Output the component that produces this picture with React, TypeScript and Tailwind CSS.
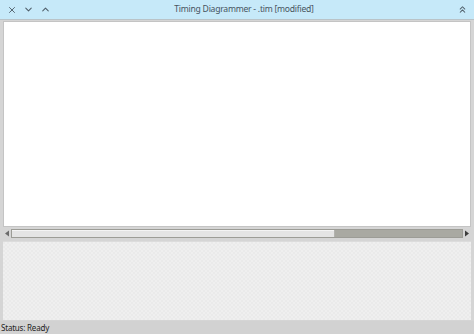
import { ChevronDown, ChevronUp, ChevronsUp, X } from "lucide-react";

function ScrollArrow({ dir }: { dir: "left" | "right" }) {
  return (
    <svg width="6" height="7" viewBox="0 0 6 7" className="shrink-0">
      {dir === "left" ? (
        <path d="M5 0.5 L1 3.5 L5 6.5 Z" fill="#6b6b6b" />
      ) : (
        <path d="M1 0.5 L5 3.5 L1 6.5 Z" fill="#3c3c3c" />
      )}
    </svg>
  );
}

export default function App() {
  return (
    <div
      className="w-[474px] h-[334px] flex flex-col bg-[#d5d5d5] overflow-hidden"
      style={{ fontFamily: '"Noto Sans", "Open Sans", sans-serif' }}
    >
      {/* title bar */}
      <div className="h-[20px] shrink-0 bg-[#c6e9f9] flex items-center relative border-b border-[#b9c3c8]">
        <div className="flex items-center gap-[6px] pl-[7px] text-[#4e5d68]">
          <X className="w-[10px] h-[10px]" strokeWidth={2.2} />
          <ChevronDown className="w-[11px] h-[11px]" strokeWidth={2.2} />
          <ChevronUp className="w-[11px] h-[11px]" strokeWidth={2.2} />
        </div>
        <div className="flex-1 text-center text-[8.6px] tracking-[-0.25px] text-[#46545e] leading-none pr-[20px]">
          Timing Diagrammer - .tim [modified]
        </div>
        <div className="pr-[6px] text-[#4e5d68]">
          <ChevronsUp className="w-[11px] h-[11px]" strokeWidth={2.2} />
        </div>
      </div>

      {/* body */}
      <div className="flex-1 flex flex-col px-[3px] pt-[1px]">
        <div className="h-[206px] bg-white border border-[#c4c4c4]" />

        {/* horizontal scrollbar */}
        <div className="h-[12px] flex items-center gap-[1px] px-[1px]">
          <ScrollArrow dir="left" />
          <div className="flex-1 h-[9px] flex bg-[#a9a9a2] border border-[#9c9c96]">
            <div className="w-[323px] h-full bg-[#e4e4e4] border-r border-[#b2b2ae] shadow-[inset_0_1px_0_#f4f4f4]" />
          </div>
          <ScrollArrow dir="right" />
        </div>

        <div className="h-[2px]" />
        {/* lower panel with faint checker texture */}
        <div className="flex-1 bg-[#eeeeee] bg-[repeating-conic-gradient(#efefef_0_25%,#eaeaea_0_50%)] bg-[length:4px_4px] border-t border-[#dcdcdc] mb-[1px]" />
      </div>

      {/* status bar */}
      <div className="h-[13px] shrink-0 flex items-center pl-[1px] text-[8px] tracking-[-0.2px] text-[#222] leading-none bg-[#d2d2d2]">
        Status: Ready
      </div>
    </div>
  );
}
